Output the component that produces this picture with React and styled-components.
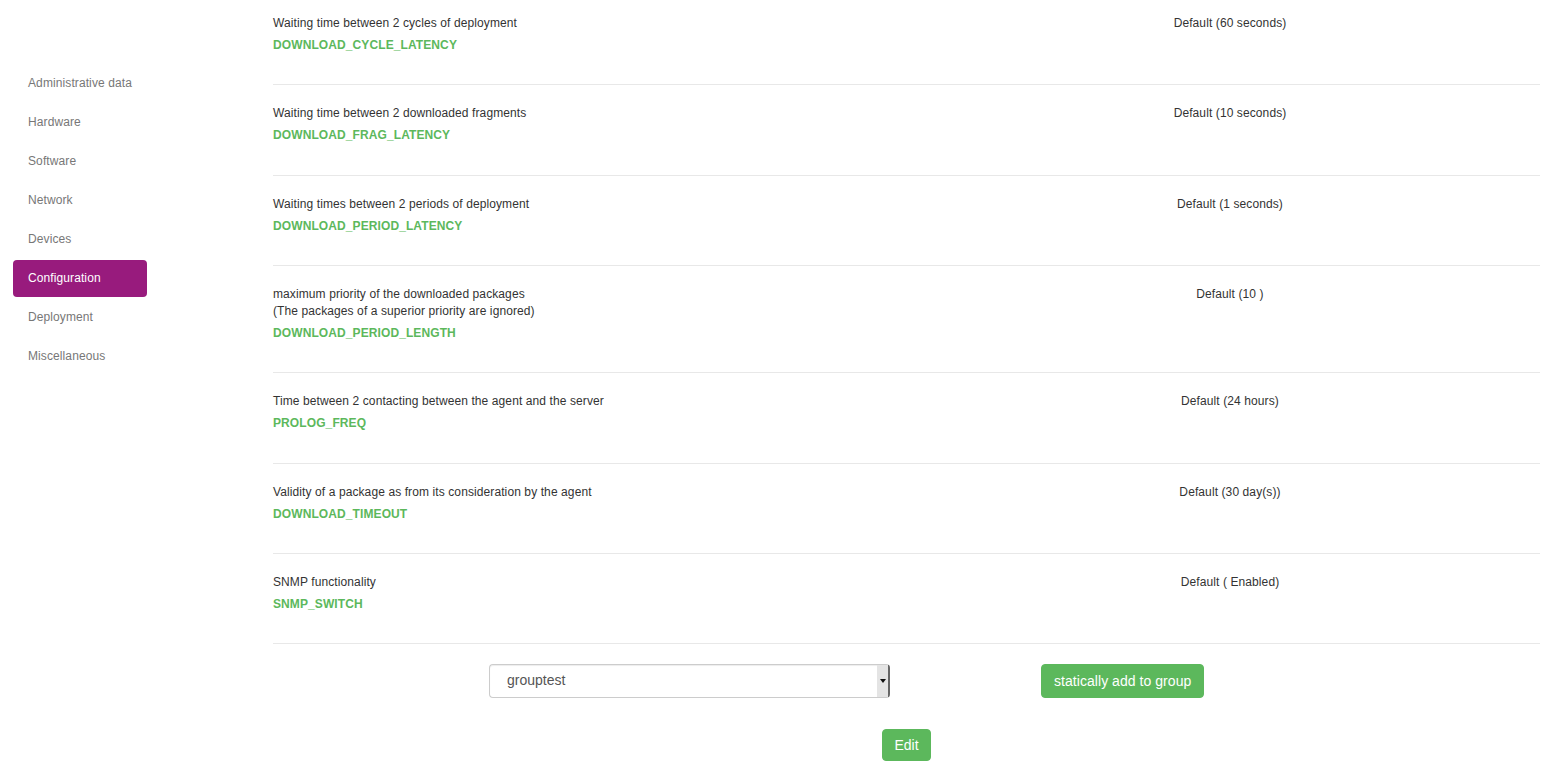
import React, { useState } from "react";
import styled, { createGlobalStyle } from "styled-components";

const GlobalStyle = createGlobalStyle`
  body {
    margin: 0;
    background: #fff;
    font-family: "Liberation Sans", Arial, sans-serif;
    font-size: 12px;
    line-height: 1.428571;
    letter-spacing: 0.1px;
    color: #333;
  }
`;

const menu = [
  "Administrative data",
  "Hardware",
  "Software",
  "Network",
  "Devices",
  "Configuration",
  "Deployment",
  "Miscellaneous",
];

const options = [
  {
    label: ["Waiting time between 2 cycles of deployment"],
    key: "DOWNLOAD_CYCLE_LATENCY",
    value: "Default (60 seconds)",
  },
  {
    label: ["Waiting time between 2 downloaded fragments"],
    key: "DOWNLOAD_FRAG_LATENCY",
    value: "Default (10 seconds)",
  },
  {
    label: ["Waiting times between 2 periods of deployment"],
    key: "DOWNLOAD_PERIOD_LATENCY",
    value: "Default (1 seconds)",
  },
  {
    label: [
      "maximum priority of the downloaded packages",
      "(The packages of a superior priority are ignored)",
    ],
    key: "DOWNLOAD_PERIOD_LENGTH",
    value: "Default (10 )",
  },
  {
    label: ["Time between 2 contacting between the agent and the server"],
    key: "PROLOG_FREQ",
    value: "Default (24 hours)",
  },
  {
    label: ["Validity of a package as from its consideration by the agent"],
    key: "DOWNLOAD_TIMEOUT",
    value: "Default (30 day(s))",
  },
  {
    label: ["SNMP functionality"],
    key: "SNMP_SWITCH",
    value: "Default ( Enabled)",
  },
];

const App = () => {
  const [active, setActive] = useState("Configuration");

  return (
    <Page>
      <GlobalStyle />
      <Sidebar>
        {menu.map(item => (
          <NavItem
            key={item}
            $active={item === active}
            onClick={() => setActive(item)}
          >
            {item}
          </NavItem>
        ))}
      </Sidebar>
      <Main>
        {options.map(opt => (
          <OptionRow key={opt.key}>
            <div>
              {opt.label.map(line => (
                <Label key={line}>{line}</Label>
              ))}
              <Key>{opt.key}</Key>
            </div>
            <Value>{opt.value}</Value>
          </OptionRow>
        ))}
        <GroupRow>
          <Select>
            <SelectText>grouptest</SelectText>
            <SelectArrow>
              <svg width="6" height="4" viewBox="0 0 6 4">
                <path d="M0 0 H6 L3 4 Z" fill="#111" />
              </svg>
            </SelectArrow>
          </Select>
          <Button>statically add to group</Button>
        </GroupRow>
        <EditRow>
          <Button $narrow>Edit</Button>
        </EditRow>
      </Main>
    </Page>
  );
};

const Page = styled.div`
  display: flex;
  align-items: flex-start;
`;

const Sidebar = styled.nav`
  width: 134px;
  margin: 65px 126px 0 13px;
  display: flex;
  flex-direction: column;
  gap: 2px;
`;

const NavItem = styled.div`
  padding: 10px 15px;
  line-height: 17px;
  font-size: 12px;
  border-radius: 4px;
  cursor: pointer;
  color: ${p => (p.$active ? "#fff" : "#777")};
  background: ${p => (p.$active ? "#981b7d" : "transparent")};
`;

const Main = styled.div`
  width: 1267px;
  padding-bottom: 8px;
`;

const OptionRow = styled.div`
  display: grid;
  grid-template-columns: 647px 1fr;
  padding: 20px 0 30px;
  border-bottom: 1px solid #e8e8e8;

  &:first-child {
    padding-top: 15px;
  }
`;

const Label = styled.div`
  color: #333;
`;

const Key = styled.div`
  margin-top: 5px;
  font-weight: bold;
  color: #5cb85c;
`;

const Value = styled.div`
  text-align: center;
  color: #333;
`;

const GroupRow = styled.div`
  display: flex;
  align-items: flex-start;
  margin-top: 20px;
  padding-left: 216px;
`;

const Select = styled.div`
  width: 401px;
  height: 34px;
  box-sizing: border-box;
  display: flex;
  align-items: stretch;
  border: 1px solid #ccc;
  border-right: 2px solid #666;
  border-radius: 4px;
  box-shadow: inset 0 1px 1px rgba(0, 0, 0, 0.075);
  margin-right: 151px;
`;

const SelectText = styled.div`
  flex: 1;
  display: flex;
  align-items: center;
  padding-left: 17px;
  font-size: 14px;
  letter-spacing: 0;
  color: #555;
`;

const SelectArrow = styled.div`
  width: 11px;
  background: #e4e4e4;
  display: flex;
  align-items: center;
  justify-content: center;
`;

const Button = styled.button`
  font-family: "Liberation Sans", Arial, sans-serif;
  font-size: 14px;
  line-height: 20px;
  letter-spacing: ${p => (p.$narrow ? "0" : "0.05px")};
  padding: ${p => (p.$narrow ? "5px 11px" : "6px 12px")};
  color: #fff;
  background: #5cb85c;
  border: 1px solid #5cb85c;
  border-radius: 4px;
  cursor: pointer;
`;

const EditRow = styled.div`
  display: flex;
  justify-content: center;
  margin-top: 31px;
`;

export default App;
